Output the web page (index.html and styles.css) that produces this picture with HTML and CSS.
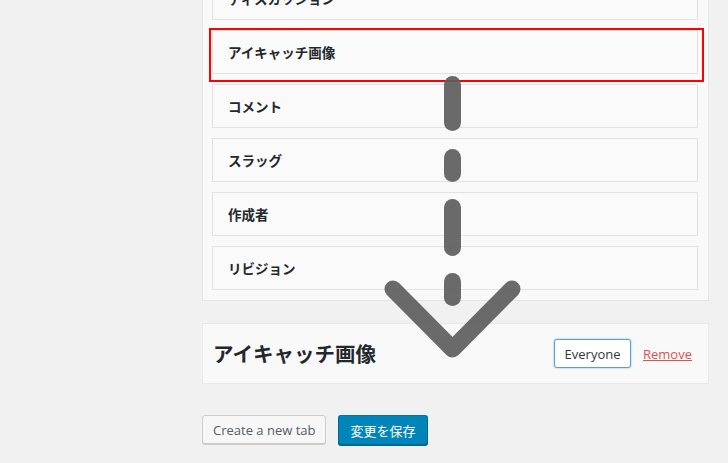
FILE: index.html
```html
<!DOCTYPE html>
<html lang="ja">
<head>
<meta charset="utf-8">
<link rel="stylesheet" href="styles.css">
</head>
<body>
<div class="page">
  <div class="panel">
    <div class="item">ディスカッション</div>
    <div class="item item-hl">アイキャッチ画像<span class="hl"></span></div>
    <div class="item">コメント</div>
    <div class="item">スラッグ</div>
    <div class="item">作成者</div>
    <div class="item">リビジョン</div>
  </div>
  <div class="tab">
    <h2 class="tab-title">アイキャッチ画像</h2>
    <div class="tab-actions">
      <button class="role">Everyone</button>
      <a class="remove" href="#">Remove</a>
    </div>
  </div>
  <div class="actions">
    <button class="btn">Create a new tab</button>
    <button class="btn btn-primary">変更を保存</button>
  </div>
</div>
<svg class="arrow" width="728" height="463" viewBox="0 0 728 463" aria-hidden="true">
  <g stroke="#5e5e5e" stroke-width="17" stroke-linecap="round" stroke-linejoin="round" fill="none">
    <line x1="452.5" y1="84.5" x2="452.5" y2="122.5"/>
    <line x1="452.5" y1="157.5" x2="452.5" y2="173.5"/>
    <line x1="452.5" y1="207.5" x2="452.5" y2="247.5"/>
    <line x1="452.5" y1="281.5" x2="452.5" y2="297.5"/>
    <polyline points="393,289 452.5,349 512,289"/>
  </g>
</svg>
</body>
</html>
```
FILE: styles.css
```css
html, body {
  margin: 0;
  padding: 0;
}
body {
  background: #f1f1f1;
  font-family: "Open Sans", "Noto Sans CJK JP", sans-serif;
  color: #23282d;
  width: 728px;
  height: 463px;
  overflow: hidden;
  position: relative;
}
.page {
  padding-left: 202px;
  width: 507px;
}
.panel {
  margin-top: -34px;
  background: #f9f9f9;
  border: 1px solid #e5e5e5;
  padding: 9px 10px 10px 9px;
  display: flex;
  flex-direction: column;
  gap: 10px;
}
.item {
  position: relative;
  height: 44px;
  box-sizing: border-box;
  border: 1px solid #e2e2e2;
  background: #fafafa;
  padding-left: 15px;
  display: flex;
  align-items: center;
  font-family: "Noto Sans CJK JP", sans-serif;
  font-weight: 700;
  font-size: 13.5px;
  color: #23282d;
}
.hl {
  position: absolute;
  top: -3px;
  left: -4px;
  right: -7px;
  bottom: -9px;
  border: 2px solid #ff0000;
}
.tab {
  margin-top: 22px;
  height: 61px;
  box-sizing: border-box;
  background: #f9f9f9;
  border: 1px solid #e8e8e8;
  display: flex;
  align-items: center;
  justify-content: space-between;
  padding: 0 16px 0 10px;
}
.tab-title {
  margin: 0;
  font-family: "Noto Sans CJK JP", sans-serif;
  font-weight: 700;
  font-size: 20.5px;
  color: #23282d;
  line-height: 1;
}
.tab-actions {
  display: flex;
  align-items: center;
  gap: 12px;
}
.role {
  font-family: "Open Sans", sans-serif;
  font-size: 13px;
  color: #32373c;
  background: #fff;
  border: 1px solid #5b9dd9;
  border-radius: 3px;
  box-shadow: 0 0 2px rgba(30, 140, 190, 0.6);
  height: 29px;
  width: 77px;
  padding: 0;
}
.remove {
  font-family: "Open Sans", sans-serif;
  font-size: 13px;
  color: #d9534f;
  text-decoration: underline;
}
.actions {
  margin-top: 31px;
  display: flex;
  gap: 12px;
}
.btn {
  font-family: "Open Sans", "Noto Sans CJK JP", sans-serif;
  font-size: 13px;
  height: 29px;
  padding: 0 10px;
  border: 1px solid #cccccc;
  border-radius: 3px;
  background: #f7f7f7;
  color: #555d66;
  box-shadow: 0 1px 0 #cccccc;
}
.btn-primary {
  height: 30px;
  background: #0085ba;
  border-color: #0073aa #006799 #006799;
  color: #ffffff;
  box-shadow: 0 1px 0 #006799;
  padding: 0 11px;
}
.arrow {
  position: absolute;
  left: 0;
  top: 0;
  opacity: 0.92;
  pointer-events: none;
}
```
